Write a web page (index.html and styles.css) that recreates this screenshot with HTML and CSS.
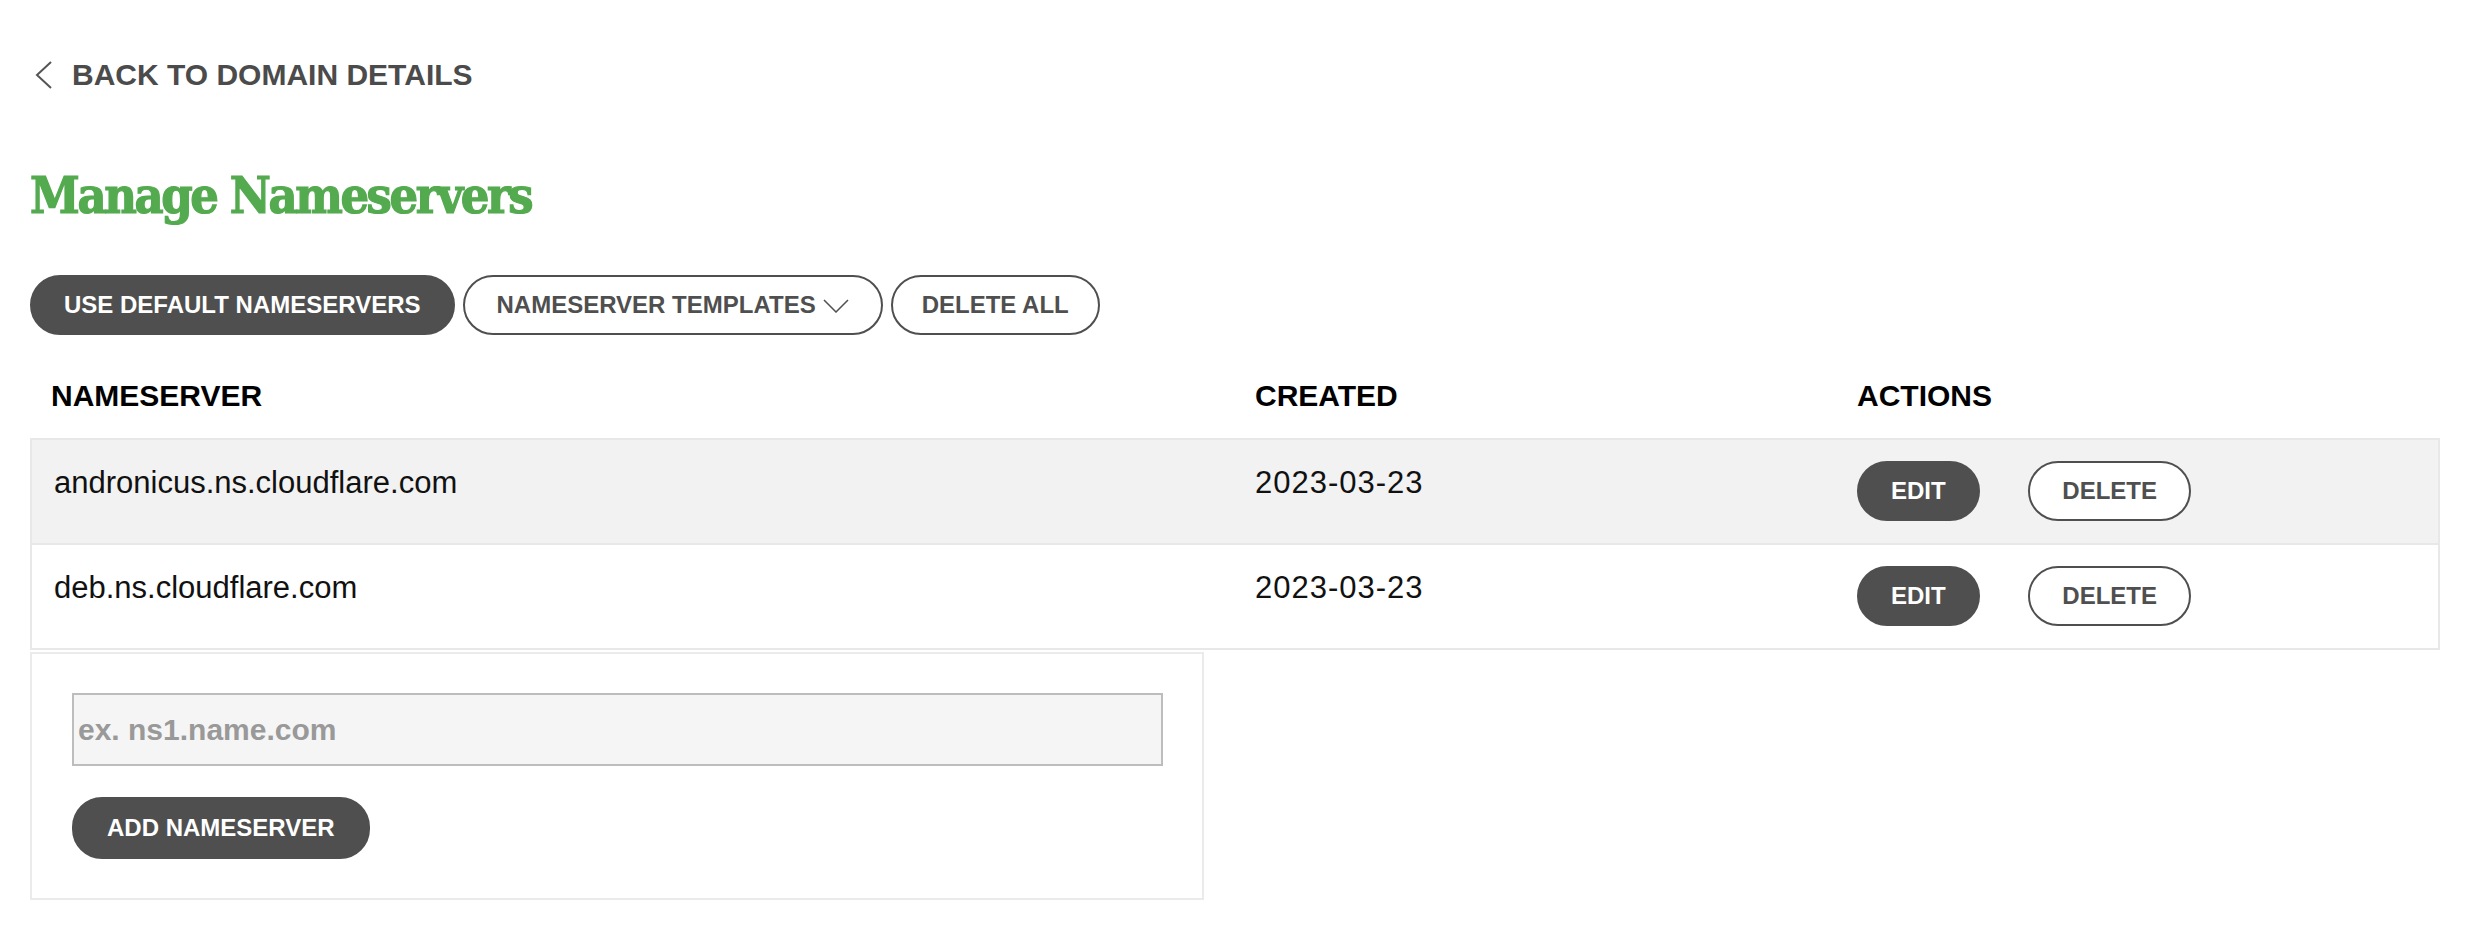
FILE: index.html
```html
<!DOCTYPE html>
<html>
<head>
  <meta charset="utf-8">
  <link rel="stylesheet" href="styles.css">
</head>
<body class="body">
<div class="page">
  <a class="back" href="#">
    <svg class="back-icon" width="18" height="28" viewBox="0 0 18 28"><polyline points="16,1 2,14 16,27" fill="none" stroke="#555" stroke-width="2"/></svg>
    <span>BACK TO DOMAIN DETAILS</span>
  </a>

  <h1 class="title">Manage Nameservers</h1>

  <div class="toolbar">
    <button class="btn btn-dark">USE DEFAULT NAMESERVERS</button>
    <button class="btn btn-line">NAMESERVER TEMPLATES
      <svg class="caret" width="26" height="14" viewBox="0 0 26 14"><polyline points="1,1 13,13 25,1" fill="none" stroke="#505050" stroke-width="1.5"/></svg>
    </button>
    <button class="btn btn-line btn-small">DELETE ALL</button>
  </div>

  <table class="ns-table">
    <thead>
      <tr>
        <th class="col-name">NAMESERVER</th>
        <th class="col-date">CREATED</th>
        <th class="col-act">ACTIONS</th>
      </tr>
    </thead>
    <tbody>
      <tr class="row-grey">
        <td>andronicus.ns.cloudflare.com</td>
        <td class="date">2023-03-23</td>
        <td class="actions">
          <button class="btn btn-dark">EDIT</button>
          <button class="btn btn-line">DELETE</button>
        </td>
      </tr>
      <tr>
        <td>deb.ns.cloudflare.com</td>
        <td class="date">2023-03-23</td>
        <td class="actions">
          <button class="btn btn-dark">EDIT</button>
          <button class="btn btn-line">DELETE</button>
        </td>
      </tr>
    </tbody>
  </table>

  <div class="add-box">
    <input class="ns-input" type="text" placeholder="ex. ns1.name.com">
    <button class="btn btn-dark btn-add">ADD NAMESERVER</button>
  </div>
</div>
</body>
</html>
```

FILE: styles.css
```css
.body { margin:0; background:#FFFFFF; font-family:"Liberation Sans", Arial, sans-serif; color:#111111; }
.page { padding:57px 32px 0 30px; }

/* back link */
.back { display:flex; align-items:center; gap:19px; padding-left:5px; color:#4b4b4b; text-decoration:none; font-size:30px; font-weight:bold; line-height:36px; }
.back-icon { display:block; }

/* heading */
.title { margin:73px 0 0 0; font-family:"DejaVu Serif Condensed", "DejaVu Serif", serif; font-size:50px; line-height:60px; font-weight:bold; letter-spacing:-2.4px; color:#54aa4f; -webkit-text-stroke:1.2px #54aa4f; }

/* buttons */
.toolbar { display:flex; gap:8px; margin-top:49px; }
.btn { display:inline-flex; align-items:center; justify-content:center; gap:7px; box-sizing:border-box; height:60px; padding:0 32px; border:2px solid #4f4f4f; border-radius:30px; font-family:"Liberation Sans", Arial, sans-serif; font-size:24px; font-weight:bold; cursor:pointer; }
.btn-dark { background:#4f4f4f; color:#FFFFFF; }
.btn-line { background:#FFFFFF; color:#4f4f4f; }
.btn-small { padding:0 29px; }
.caret { display:block; margin-top:2px; }

/* table */
.ns-table { width:100%; border-collapse:collapse; }
.ns-table th { text-align:left; padding:43px 20px 24px 20px; font-size:30px; line-height:36px; font-weight:bold; color:#000000; }
.col-name { width:50%; }
.col-date { width:25%; }
.ns-table td { vertical-align:top; padding:25px 20px 22px 22px; font-size:31px; line-height:36px; border:2px solid #e8e8e8; border-left:none; border-right:none; }
.ns-table td:first-child { border-left:2px solid #e8e8e8; }
.ns-table td:last-child { border-right:2px solid #e8e8e8; }
.ns-table td.date { padding-left:20px; letter-spacing:1px; }
.row-grey td { background:#f2f2f2; }
.ns-table td.actions { padding-left:20px; }
.actions .btn { margin-top:-4px; margin-right:40px; }

/* add form */
.add-box { box-sizing:border-box; width:1174px; margin-top:2px; padding:39px 40px 39px 40px; border:2px solid #ebebeb; }
.ns-input { display:block; box-sizing:border-box; width:1091px; height:73px; padding:0 4px; background:#f5f5f5; border:2px solid #bdbdbd; font-family:"Liberation Sans", Arial, sans-serif; font-size:30px; font-weight:bold; color:#333333; }
.ns-input::placeholder { color:#999999; }
.btn-add { margin-top:31px; height:62px; padding:0 33px; }
```
